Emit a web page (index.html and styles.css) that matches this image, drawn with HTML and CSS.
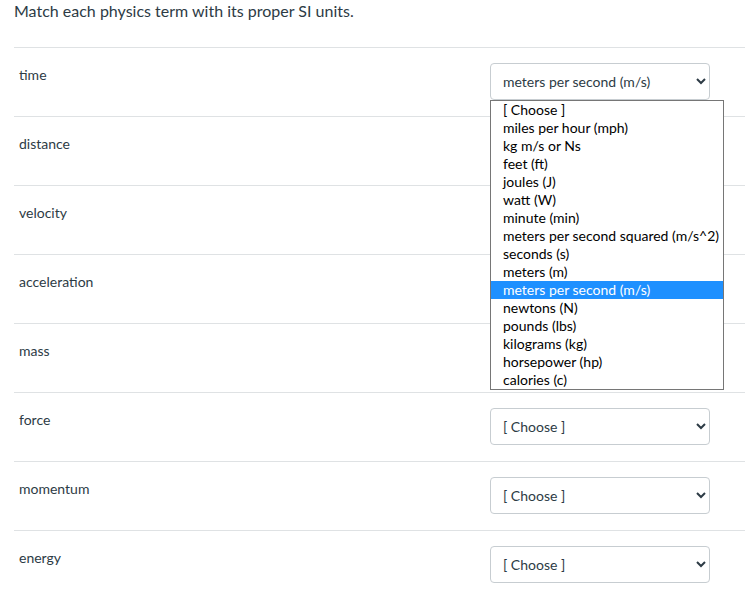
FILE: index.html
```html
<!DOCTYPE html>
<html lang="en">
<head>
    <meta charset="UTF-8">
    <meta name="viewport" content="width=device-width, initial-scale=1.0">
    <title>Quiz | Matching</title>
    <link rel="stylesheet" href="styles.css">
</head>
<body>
    <div class="question">
        <p class="question-text">Match each physics term with its proper SI units.</p>

        <div class="match-list">
            <div class="match-row">
                <label class="match-label" for="m1">time</label>
                <div class="select-wrap">
                    <select class="match-select" id="m1">
                        <option>meters per second (m/s)</option>
                    </select>

                    <!-- open dropdown of the first select -->
                    <ul class="select-popup">
                        <li>[ Choose ]</li>
                        <li>miles per hour (mph)</li>
                        <li>kg m/s or Ns</li>
                        <li>feet (ft)</li>
                        <li>joules (J)</li>
                        <li>watt (W)</li>
                        <li>minute (min)</li>
                        <li>meters per second squared (m/s^2)</li>
                        <li>seconds (s)</li>
                        <li>meters (m)</li>
                        <li class="active">meters per second (m/s)</li>
                        <li>newtons (N)</li>
                        <li>pounds (lbs)</li>
                        <li>kilograms (kg)</li>
                        <li>horsepower (hp)</li>
                        <li>calories (c)</li>
                    </ul>
                </div>
            </div>

            <div class="match-row">
                <label class="match-label" for="m2">distance</label>
                <div class="select-wrap">
                    <select class="match-select" id="m2"><option>[ Choose ]</option></select>
                </div>
            </div>

            <div class="match-row">
                <label class="match-label" for="m3">velocity</label>
                <div class="select-wrap">
                    <select class="match-select" id="m3"><option>[ Choose ]</option></select>
                </div>
            </div>

            <div class="match-row">
                <label class="match-label" for="m4">acceleration</label>
                <div class="select-wrap">
                    <select class="match-select" id="m4"><option>[ Choose ]</option></select>
                </div>
            </div>

            <div class="match-row">
                <label class="match-label" for="m5">mass</label>
                <div class="select-wrap">
                    <select class="match-select" id="m5"><option>[ Choose ]</option></select>
                </div>
            </div>

            <div class="match-row">
                <label class="match-label" for="m6">force</label>
                <div class="select-wrap">
                    <select class="match-select" id="m6"><option>[ Choose ]</option></select>
                </div>
            </div>

            <div class="match-row">
                <label class="match-label" for="m7">momentum</label>
                <div class="select-wrap">
                    <select class="match-select" id="m7"><option>[ Choose ]</option></select>
                </div>
            </div>

            <div class="match-row">
                <label class="match-label" for="m8">energy</label>
                <div class="select-wrap">
                    <select class="match-select" id="m8"><option>[ Choose ]</option></select>
                </div>
            </div>
        </div>
    </div>
</body>
</html>
```

FILE: styles.css
```css
* {
    box-sizing: border-box;
    margin: 0;
    padding: 0;
    font-family: Lato, 'Open Sans', sans-serif;
}

body {
    background-color: #fff;
    color: #2d3b45;
}

.question {
    padding-left: 14px;
}

.question-text {
    font-size: 16px;
    line-height: 22px;
    margin-bottom: 25px;
}

/* Rows */
.match-row {
    display: flex;
    align-items: flex-start;
    border-top: 1px solid #dfe2e4;
    padding: 15px 0 16px 5px;
}

.match-label {
    flex: 0 0 471px;
    font-size: 14px;
    line-height: 20px;
    padding-top: 2px;
}

.select-wrap {
    position: relative;
}

.match-select {
    width: 220px;
    height: 37px;
    padding: 0 8px 1px 8px;
    border: 1px solid #c7cdd1;
    border-radius: 4px;
    background: #fff;
    color: #2d3b45;
    font-size: 14px;
}

/* Open dropdown */
.select-popup {
    position: absolute;
    top: 37px;
    left: 0;
    width: 234px;
    list-style: none;
    background: #fff;
    border: 1px solid #767676;
    z-index: 10;
}

.select-popup li {
    height: 18px;
    line-height: 17px;
    padding-left: 12px;
    font-size: 14px;
    color: #000;
    white-space: nowrap;
}

.select-popup li.active {
    background: #1e90ff;
    color: #fff;
}
```
